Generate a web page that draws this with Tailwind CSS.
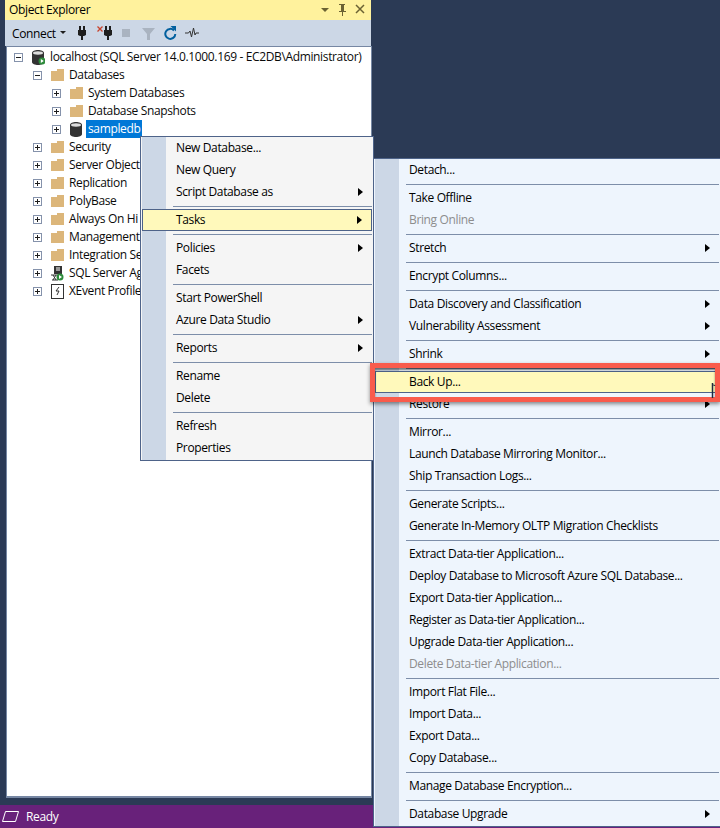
<!DOCTYPE html>
<html lang="en">
<head>
  <meta charset="UTF-8" />
  <title>Object Explorer</title>
  <script src="https://cdn.jsdelivr.net/npm/@tailwindcss/browser@4"></script>
</head>
<body class="relative w-[720px] h-[828px] overflow-hidden bg-[#2b3a55] font-['Open_Sans',sans-serif] text-[12px] tracking-[-0.36px] text-black">

<div class="flex flex-col h-[828px]">
  <div class="flex-1 pl-[5px] w-[371px] flex flex-col">
    <!-- title -->
    <div class="h-[20px] bg-[#fff29d] flex items-center pl-[4px] pr-[6px]">
      <span>Object Explorer</span>
      <svg class="ml-auto" width="44" height="14" viewBox="0 0 44 14">
        <path d="M0 5h8l-4 4z" fill="#6b6233"/>
        <path d="M18 1h6v1h-1v6h2v1h-3v4h-1V9h-3V8h2V2h-2z" fill="#6b6233"/>
        <path d="M35 2l8 8M43 2l-8 8" stroke="#6b6233" stroke-width="1.500"/>
      </svg>
    </div>
    <!-- toolbar -->
    <div class="h-[26px] bg-[#ccd7e6] flex items-center pl-[7px]">
      <span class="w-[48px] pt-px">Connect</span>
      <svg width="6" height="4"><path d="M0 0h6L3 3z" fill="#1e1e1e"/></svg>
      <svg class="ml-[12px]" width="8" height="14" viewBox="0 0 8 14"><path d="M1 0h2v4H1zM5 0h2v4H5zM0 4h8v5L6 10H5v4H3v-4H2L0 9z" fill="#1e1e1e"/></svg>
      <svg class="ml-[11px]" width="15" height="14" viewBox="0 0 15 14"><path d="M8 0h2v4H8zM12 0h2v4h-2zM7 4h8v5l-2 1h-1v4h-2v-4H9L7 9z" fill="#1e1e1e"/><path d="M.5 .5l5 5M5.500 .5l-5 5" stroke="#c8432d" stroke-width="1.300"/></svg>
      <div class="ml-[10px] w-[8px] h-[8px] bg-[#a9b3c0]"></div>
      <svg class="ml-[12px]" width="13" height="13" viewBox="0 0 13 13"><path d="M0 1h13L8 7v6H5V7z" fill="#a9b3c0"/></svg>
      <svg class="ml-[9px]" width="13" height="14" viewBox="0 0 13 14"><path d="M10 4.500A5 5 0 1 0 11.300 8" fill="none" stroke="#005f9e" stroke-width="2"/><path d="M6.500 0L12 0v5.500z" fill="#005f9e"/></svg>
      <svg class="ml-[8px]" width="14" height="10" viewBox="0 0 14 10"><path d="M0 5h3.500l1.500-2 1.500 6 2-9 1.500 7 1-2h3" fill="none" stroke="#333" stroke-width="1"/></svg>
    </div>
    <!-- tree -->
    <div class="h-[752px] bg-white border border-[#7687a3] border-b-2 ml-px -mr-px pt-px text-[#0a0a0a]" id="tree"></div>
    <div class="h-[7px]"></div>
  </div>
  <div class="h-[23px] bg-[#68217a] flex items-center pl-[2px] text-white">
    <svg width="17" height="11" viewBox="0 0 17 11"><path d="M3.500 .5h13l-3 10H.5z" fill="none" stroke="#fff" stroke-width="1"/></svg>
    <span class="ml-[7px]">Ready</span>
  </div>
</div>

<!-- Tasks submenu -->
<div id="menu2" class="absolute left-[373px] top-[158px] w-[347px] h-[669px] bg-[#eef5fd] border border-[#4e6389] border-r-0 px-px"></div>
<!-- database context menu, sits over the submenu -->
<div id="menu1" class="absolute left-[140px] top-[136px] w-[234px] h-[325px] bg-[#f5f5f5] border border-[#4e6389] px-px"></div>

<!-- callout -->
<div class="absolute left-[370px] top-[363px] w-[350px] h-[39px] border-[5px] border-[#f95b4c] shadow-[0_2px_4px_rgba(0,0,0,0.45),inset_0_2px_2px_rgba(0,0,0,0.5)]"></div>
<!-- mouse pointer stub -->
<svg class="absolute left-[711px] top-[383px]" width="5" height="15" viewBox="0 0 5 15"><path d="M1.500 0v15" stroke="#1e2a3c" stroke-width="1.500"/><path d="M2.500 1l2 2h-2z" fill="#1e2a3c"/></svg>

<script>
  const folder = '<svg width="13" height="12" viewBox="0 0 13 12"><path d="M0 2h6V0h7v12H0z" fill="#dcb67a"/></svg>';
  const cyl = (extra = '') => `<svg width="14" height="15" viewBox="0 0 14 15"><path d="M1 3c0-4 12-4 12 0v9c0 4-12 4-12 0z" fill="#333"/><ellipse cx="7" cy="3" rx="5" ry="1.700" fill="#ddd"/>${extra}</svg>`;
  const run = '<circle cx="11" cy="11" r="3.500" fill="#2e8b3c"/><path d="M9.800 9l3 2-3 2z" fill="#fff"/>';
  const agent = '<svg width="14" height="15" viewBox="0 0 14 15"><rect x="4" y="0" width="8" height="8" fill="#333"/><path d="M6 2h4M6 4h4" stroke="#fff"/><path d="M1 9h7M2 14h6M3 9l3 5M6 9l-3 5" stroke="#333"/><circle cx="10" cy="11" r="3.500" fill="#2e8b3c"/><path d="M9 9l3 2-3 2z" fill="#fff"/></svg>';
  const xevent = '<svg width="13" height="15" viewBox="0 0 13 15"><rect x=".5" y=".5" width="12" height="14" fill="#fff" stroke="#333"/><path d="M8 3L5 7h3l-2 4" fill="none" stroke="#333"/></svg>';

  const box = open => `<span class="w-[9px] h-[9px] shrink-0 border border-[#8592ab] flex items-center justify-center relative"><span class="w-[5px] h-px bg-[#1e1e1e]"></span>${open ? '' : '<span class="absolute w-px h-[5px] bg-[#1e1e1e]"></span>'}</span>`;

  // [indent, open, icon, label, selected]; labels stop where the menu covers them
  const nodes = [
    [7, true, cyl(run), 'localhost (SQL Server 14.0.1000.169 - EC2DB\\Administrator)'],
    [26, true, folder, 'Databases'],
    [45, false, folder, 'System Databases'],
    [45, false, folder, 'Database Snapshots'],
    [45, false, cyl(), 'sampledb', true],
    [26, false, folder, 'Security'],
    [26, false, folder, 'Server Object'],
    [26, false, folder, 'Replication'],
    [26, false, folder, 'PolyBase'],
    [26, false, folder, 'Always On Hi'],
    [26, false, folder, 'Management'],
    [26, false, folder, 'Integration Se'],
    [26, false, agent, 'SQL Server Ag'],
    [26, false, xevent, 'XEvent Profile'],
  ];
  document.getElementById('tree').innerHTML = nodes.map(([x, open, icon, label, sel], i) => `
    <div class="h-[18px] flex items-center whitespace-nowrap ${i > 4 ? 'w-[134px] overflow-hidden' : ''}" style="padding-left:${x}px">
      ${box(open)}
      <span class="ml-[8px] w-[14px] flex justify-center shrink-0">${icon}</span>
      <span class="ml-[3px] px-[2px] leading-[18px] ${sel ? 'bg-[#0078d7] text-white' : ''}">${label}</span>
    </div>`).join('');

  const arrow = hot => `<svg class="absolute right-[9px] ${hot ? 'top-[6px]' : 'top-[7px]'}" width="5" height="8"><path d="M0 0l5 4-5 4z" fill="#000"/></svg>`;
  // row: [label, hasArrow, state]; '-' is a separator
  function rows(list) {
    return list.map(r => {
      if (r === '-') return '<div class="h-[6px] ml-[31px] pt-[3px]"><div class="h-px bg-[#7d8ea9]"></div></div>';
      const [label, sub, state] = r;
      const cls = state === 'hot' ? 'bg-[#fff9bb] border border-[#4e6389] pl-[33px] leading-[20px]'
        : 'pl-[34px] leading-[22px]';
      return `<div class="relative h-[22px] ${cls} ${state === 'off' ? 'text-[#8d8d8d]' : ''}">${label}${sub ? arrow(state === 'hot') : ''}</div>`;
    }).join('');
  }
  const strip = '<div class="absolute left-0 top-0 bottom-0 w-[24px] ml-px bg-[#ccd7e6]"></div>';
  document.getElementById('menu1').innerHTML = strip + '<div class="relative">' + rows([
    ['New Database...'], ['New Query'], ['Script Database as', 1], '-',
    ['Tasks', 1, 'hot'], '-',
    ['Policies', 1], ['Facets'], '-',
    ['Start PowerShell'], ['Azure Data Studio', 1], '-',
    ['Reports', 1], '-',
    ['Rename'], ['Delete'], '-',
    ['Refresh'], ['Properties'],
  ]) + '</div>';
  document.getElementById('menu2').innerHTML = strip + '<div class="relative">' + rows([
    ['Detach...'], '-',
    ['Take Offline'], ['Bring Online', 0, 'off'], '-',
    ['Stretch', 1], '-',
    ['Encrypt Columns...'], '-',
    ['Data Discovery and Classification', 1], ['Vulnerability Assessment', 1], '-',
    ['Shrink', 1], '-',
    ['Back Up...', 0, 'hot'], ['Restore', 1], '-',
    ['Mirror...'], ['Launch Database Mirroring Monitor...'], ['Ship Transaction Logs...'], '-',
    ['Generate Scripts...'], ['Generate In-Memory OLTP Migration Checklists'], '-',
    ['Extract Data-tier Application...'], ['Deploy Database to Microsoft Azure SQL Database...'], ['Export Data-tier Application...'], ['Register as Data-tier Application...'], ['Upgrade Data-tier Application...'], ['Delete Data-tier Application...', 0, 'off'], '-',
    ['Import Flat File...'], ['Import Data...'], ['Export Data...'], ['Copy Database...'], '-',
    ['Manage Database Encryption...'], '-',
    ['Database Upgrade', 1],
  ]) + '</div>';
</script>
</body>
</html>
